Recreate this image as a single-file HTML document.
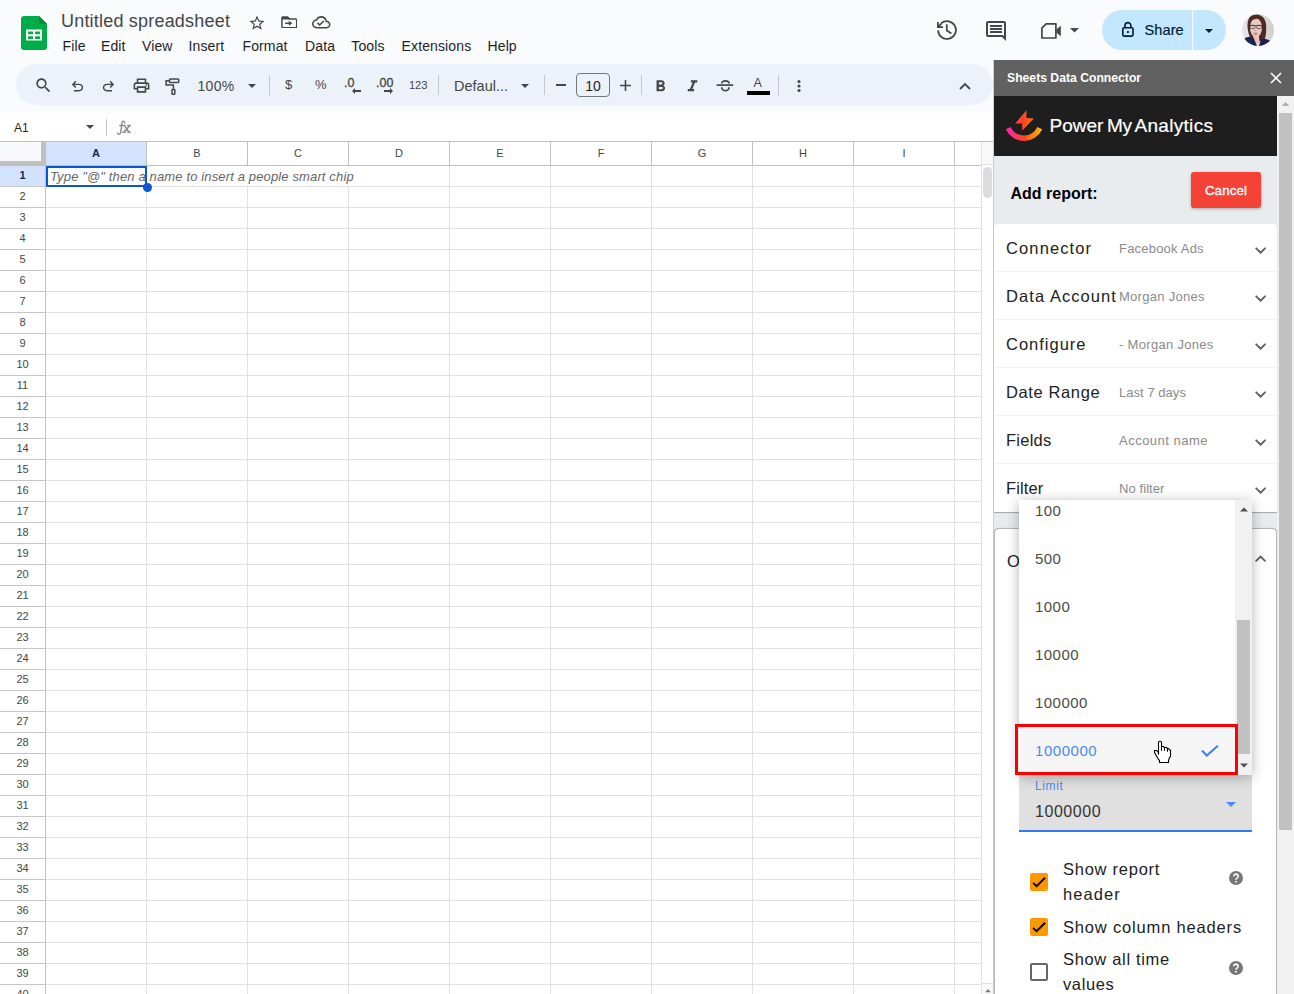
<!DOCTYPE html>
<html><head><meta charset="utf-8"><title>Sheets</title>
<style>
*{margin:0;padding:0;box-sizing:border-box}
html,body{width:1294px;height:994px;overflow:hidden}
body{background:#f9fbfd;font-family:"Liberation Sans", sans-serif;position:relative;color:#1f1f1f}
.abs{position:absolute}
.t{position:absolute;white-space:nowrap;line-height:1}
svg{position:absolute;display:block}
</style></head><body>

<svg style="left:21px;top:16px" width="26" height="34" viewBox="0 0 26 34">
<path d="M3 0h15l8 8v23a3 3 0 0 1-3 3H3a3 3 0 0 1-3-3V3a3 3 0 0 1 3-3z" fill="#00ac47"/>
<path d="M18 0l8 8h-8z" fill="#008c34"/>
<rect x="5" y="13.5" width="16" height="11" fill="#fff"/>
<rect x="7" y="15.5" width="5" height="2.8" rx="0.5" fill="#00ac47"/><rect x="14" y="15.5" width="5" height="2.8" rx="0.5" fill="#00ac47"/>
<rect x="7" y="20.3" width="5" height="2.8" rx="0.5" fill="#00ac47"/><rect x="14" y="20.3" width="5" height="2.8" rx="0.5" fill="#00ac47"/>
</svg>
<div class="t" style="left:61px;top:12px;font-size:18px;letter-spacing:0.2px;color:#444746">Untitled spreadsheet</div>
<svg style="left:247.6px;top:13.6px" width="18" height="18" viewBox="0 0 24 24"><path fill="#444746" d="M22 9.24l-7.19-.62L12 2 9.19 8.63 2 9.24l5.46 4.73L5.82 21 12 17.27 18.18 21l-1.63-7.03L22 9.24zM12 15.4l-3.76 2.27 1-4.28-3.32-2.88 4.38-.38L12 6.1l1.71 4.04 4.38.38-3.32 2.88 1 4.28L12 15.4z"/></svg>
<svg style="left:280.6px;top:15.6px" width="16.6" height="12.6" viewBox="0 0 18 14" preserveAspectRatio="none"><path fill="none" stroke="#444746" stroke-width="1.6" d="M2 1.1H7.2L9 3.3H16a1 1 0 0 1 1 1V11.9a1 1 0 0 1-1 1H2a1 1 0 0 1-1-1V2.1a1 1 0 0 1 1-1z"/><path fill="#444746" d="M1 1h6.5l2.2 3H1z"/><path stroke="#444746" stroke-width="1.7" d="M4.5 8.1H9"/><path fill="#444746" d="M8.5 5.3L12.3 8.1 8.5 10.9z"/></svg>
<svg style="left:312px;top:13px" width="18.5" height="18.5" viewBox="0 0 24 24"><path fill="#444746" d="M19.35 10.04C18.67 6.59 15.64 4 12 4 9.11 4 6.6 5.64 5.35 8.04 2.34 8.36 0 10.91 0 14c0 3.31 2.69 6 6 6h13c2.76 0 5-2.24 5-5 0-2.64-2.05-4.780-4.65-4.96zM19 18H6c-2.21 0-4-1.79-4-4 0-2.05 1.53-3.76 3.56-3.97l1.07-.11.5-.95C8.080 7.14 9.94 6 12 6c2.62 0 4.88 1.86 5.39 4.43l.3 1.5 1.53.11c1.56.1 2.78 1.41 2.78 2.96 0 1.65-1.35 3-3 3zm-9-3.82l-2.09-2.09L6.5 13.5 10 17l6.01-6.01-1.41-1.41z"/></svg>
<div class="t" style="left:62.5px;top:39px;font-size:14px;letter-spacing:0.12px;color:#1f1f1f">File</div>
<div class="t" style="left:101px;top:39px;font-size:14px;letter-spacing:0.12px;color:#1f1f1f">Edit</div>
<div class="t" style="left:142px;top:39px;font-size:14px;letter-spacing:0.12px;color:#1f1f1f">View</div>
<div class="t" style="left:188.5px;top:39px;font-size:14px;letter-spacing:0.12px;color:#1f1f1f">Insert</div>
<div class="t" style="left:242.5px;top:39px;font-size:14px;letter-spacing:0.12px;color:#1f1f1f">Format</div>
<div class="t" style="left:305px;top:39px;font-size:14px;letter-spacing:0.12px;color:#1f1f1f">Data</div>
<div class="t" style="left:351.3px;top:39px;font-size:14px;letter-spacing:0.12px;color:#1f1f1f">Tools</div>
<div class="t" style="left:401.6px;top:39px;font-size:14px;letter-spacing:0.12px;color:#1f1f1f">Extensions</div>
<div class="t" style="left:487.5px;top:39px;font-size:14px;letter-spacing:0.12px;color:#1f1f1f">Help</div>
<svg style="left:935px;top:18px" width="24" height="24" viewBox="0 0 24 24"><g fill="none" stroke="#444746" stroke-width="1.75"><path d="M3.1 12.4A8.9 8.9 0 1 0 6.3 5.2"/><path d="M2.9 4.1V9.2H8M3.2 8.9L6.6 5.3"/><path d="M11.8 6.2V12.6L16.4 15.6"/></g></svg>
<svg style="left:984px;top:19px" width="24" height="24" viewBox="0 0 24 24"><path fill="#444746" d="M22 4c0-1.1-.9-2-2-2H4c-1.1 0-2 .9-2 2v12c0 1.1.9 2 2 2h14l4 4V4zm-2 13.17L18.83 16H4V4h16v13.17zM6 12h12v2H6zm0-3h12v2H6zm0-3h12v2H6z"/></svg>
<svg style="left:1040px;top:22px" width="22" height="18" viewBox="0 0 22 18"><path fill="none" stroke="#444746" stroke-width="1.7" stroke-linejoin="round" d="M6.1 1.8H15.9V16H1.9V6.2z"/><path fill="#444746" d="M16.5 7.2L20.8 3.8V14.2L16.5 10.8z"/></svg>
<svg style="left:1070px;top:28px" width="9" height="4.5" viewBox="0 0 10 5"><path fill="#444746" d="M0 0h10L5 5z"/></svg>
<div class="abs" style="left:1102px;top:10px;width:124px;height:40px;border-radius:20px;background:#c2e7ff"></div>
<div class="abs" style="left:1192px;top:10px;width:1px;height:40px;background:#f9fbfd"></div>
<svg style="left:1120px;top:20px" width="16" height="18" viewBox="0 0 16 18"><rect x="2.8" y="7.8" width="10.2" height="8.3" rx="1.3" fill="none" stroke="#001d35" stroke-width="1.6"/><path fill="none" stroke="#001d35" stroke-width="1.6" d="M5 7.8V5.6a2.95 2.95 0 0 1 5.9 0V7.8"/><circle cx="7.9" cy="12.1" r="1.15" fill="#001d35"/></svg>
<div class="t" style="left:1144.6px;top:22.8px;font-size:14.5px;letter-spacing:0.1px;-webkit-text-stroke:0.2px #001d35;color:#001d35">Share</div>
<svg style="left:1205px;top:28.6px" width="8" height="4" viewBox="0 0 10 5"><path fill="#001d35" d="M0 0h10L5 5z"/></svg>
<svg style="left:1242px;top:14px" width="32" height="32" viewBox="0 0 32 32">
<defs><clipPath id="av"><circle cx="16" cy="16" r="16"/></clipPath>
<linearGradient id="avbg" x1="0" y1="0" x2="1" y2="0"><stop offset="0" stop-color="#e6e4ea"/><stop offset="0.6" stop-color="#dedad6"/><stop offset="1" stop-color="#d4cfc8"/></linearGradient></defs>
<g clip-path="url(#av)">
<rect width="32" height="32" fill="url(#avbg)"/>
<path d="M5.5 10 C6 3.5 9.5 0.5 14.5 0.6 C19.5 0.8 23 4 24 10 C24.6 15 24.2 20 23 25 L19.5 27 L9 26.5 C7 21.5 5.2 15.5 5.5 10z" fill="#4e2a25"/>
<ellipse cx="14" cy="13.8" rx="6" ry="9.6" fill="#e9c8c0"/>
<path d="M7.8 4.5 C10 2.8 13.5 2.4 16.5 3.6 C15 5 12 5.5 8.5 6.5z" fill="#4e2a25"/>
<path d="M7.6 11.6 H20.4" stroke="#4a3d3a" stroke-width="0.8"/>
<rect x="8" y="11.3" width="5" height="3.3" rx="1.2" fill="none" stroke="#4a3d3a" stroke-width="0.75"/>
<rect x="14.6" y="11.3" width="5" height="3.3" rx="1.2" fill="none" stroke="#4a3d3a" stroke-width="0.75"/>
<ellipse cx="13.4" cy="16.4" rx="1" ry="0.8" fill="#d79a90"/>
<ellipse cx="13.5" cy="19.7" rx="2.1" ry="1.3" fill="#d8877a"/>
<path d="M11 22 L17 22 L17.5 30 L11 30z" fill="#e6c2b8"/>
<path d="M0 32 L2.5 24.5 C5 23 8.5 22.8 11.5 23.5 L15 32z" fill="#1c2552"/>
<path d="M17 32 L19 25 C22 24.5 26 25.5 28.5 27 L30 32z" fill="#1a2050"/>
</g></svg>
<div class="abs" style="left:16px;top:64px;width:977px;height:41px;border-radius:20.5px;background:#edf2fa"></div>
<svg style="left:33.6px;top:76.2px" width="18.9" height="18.9" viewBox="0 0 24 24"><path fill="#444746" d="M15.5 14h-.79l-.28-.27C15.41 12.59 16 11.11 16 9.5 16 5.91 13.09 3 9.5 3S3 5.91 3 9.5 5.91 16 9.5 16c1.61 0 3.090-.59 4.23-1.57l.27.28v.79l5 4.99L20.49 19l-4.99-5zm-6 0C7.01 14 5 11.99 5 9.5S7.01 5 9.5 5 14 7.01 14 9.5 11.99 14 9.5 14z"/></svg>
<svg style="left:69px;top:78px" width="17" height="17" viewBox="0 -960 960 960"><path fill="#444746" d="M280-200v-80h284q63 0 109.5-40T720-420q0-60-46.5-100T564-560H312l104 104-56 56-200-200 200-200 56 56-104 104h252q97 0 166.5 63T800-420q0 94-69.5 157T564-200H280Z"/></svg>
<svg style="left:100px;top:78px" width="17" height="17" viewBox="0 -960 960 960"><path fill="#444746" d="M396-200q-97 0-166.5-63T160-420q0-94 69.5-157T396-640h252L544-744l56-56 200 200-200 200-56-56 104-104H396q-63 0-109.5 40T240-420q0 60 46.5 100T396-280h284v80H396Z"/></svg>
<svg style="left:132px;top:76px" width="19" height="19" viewBox="0 -960 960 960"><path fill="#444746" d="M640-640v-120H320v120h-80v-200h480v200h-80Zm-480 80h640-640Zm560 100q17 0 28.5-11.5T760-500q0-17-11.5-28.5T720-540q-17 0-28.5 11.5T680-500q0 17 11.5 28.5T720-460Zm-80 260v-160H320v160h320Zm80 80H240v-160H80v-240q0-51 35-85.5t85-34.5h560q51 0 85.5 34.5T880-520v240H720v160Zm80-240v-160q0-17-11.5-28.5T760-560H200q-17 0-28.5 11.5T160-520v160h80v-80h480v80h80Z"/></svg>
<svg style="left:164px;top:77px" width="16" height="19" viewBox="0 0 16 19"><g fill="none" stroke="#444746" stroke-width="1.5"><rect x="5.5" y="1.9" width="9.2" height="3.6" rx="0.8"/><path d="M5.5 3.7H2.1V7.9H9.4V12.4"/><rect x="8" y="12.4" width="2.8" height="4.9" rx="0.6"/></g></svg>
<div class="t" style="left:197.5px;top:79px;font-size:14px;letter-spacing:0.3px;color:#444746">100%</div>
<svg style="left:248px;top:84px" width="8" height="4" viewBox="0 0 10 5"><path fill="#444746" d="M0 0h10L5 5z"/></svg>
<div class="abs" style="left:269px;top:75px;width:1px;height:20px;background:#c7c7c7"></div>
<div class="t" style="left:285px;top:78px;font-size:13px;color:#444746">$</div>
<div class="t" style="left:315px;top:78px;font-size:13px;color:#444746">%</div>
<div class="t" style="left:344px;top:76.5px;font-size:12.5px;-webkit-text-stroke:0.3px #444746;color:#444746">.0</div>
<svg style="left:352px;top:88px" width="9" height="6" viewBox="0 0 9 6"><path fill="#444746" d="M3 0L0 3l3 3V4h6V2H3z"/></svg>
<div class="t" style="left:376px;top:76.5px;font-size:12.5px;-webkit-text-stroke:0.3px #444746;color:#444746">.00</div>
<svg style="left:384px;top:88px" width="9" height="6" viewBox="0 0 9 6"><path fill="#444746" d="M6 0l3 3-3 3V4H0V2h6z"/></svg>
<div class="t" style="left:409px;top:79.8px;font-size:11.2px;letter-spacing:-0.1px;color:#444746">123</div>
<div class="abs" style="left:438px;top:75px;width:1px;height:20px;background:#c7c7c7"></div>
<div class="t" style="left:454px;top:79px;font-size:14.5px;color:#444746">Defaul...</div>
<svg style="left:521px;top:84px" width="8" height="4" viewBox="0 0 10 5"><path fill="#444746" d="M0 0h10L5 5z"/></svg>
<div class="abs" style="left:544px;top:75px;width:1px;height:20px;background:#c7c7c7"></div>
<div class="abs" style="left:555.5px;top:84.2px;width:10.5px;height:1.6px;background:#444746"></div>
<div class="abs" style="left:576px;top:73px;width:34px;height:24px;border:1px solid #747775;border-radius:4px"></div>
<div class="t" style="left:576px;top:79px;width:34px;text-align:center;font-size:14px;color:#1f1f1f">10</div>
<svg style="left:619.5px;top:79.5px" width="11" height="11" viewBox="0 0 11 11"><path fill="none" stroke="#444746" stroke-width="1.6" d="M5.5 0v11M0 5.5h11"/></svg>
<div class="abs" style="left:641px;top:75px;width:1px;height:20px;background:#c7c7c7"></div>
<svg style="left:651px;top:77px" width="19" height="19" viewBox="0 0 24 24"><path fill="#444746" d="M15.6 10.79c.97-.67 1.65-1.77 1.65-2.79 0-2.26-1.75-4-4-4H7v14h7.04c2.09 0 3.71-1.7 3.71-3.79 0-1.52-.86-2.82-2.15-3.42zM10 6.5h3c.83 0 1.5.67 1.5 1.5s-.67 1.5-1.5 1.5h-3v-3zm3.5 9H10v-3h3.5c.83 0 1.5.67 1.5 1.5s-.67 1.5-1.5 1.5z"/></svg>
<svg style="left:683px;top:77px" width="19" height="19" viewBox="0 0 24 24"><path fill="#444746" d="M10 4v3h2.21l-3.42 8H6v3h8v-3h-2.21l3.42-8H18V4z"/></svg>
<svg style="left:716px;top:78px" width="18" height="15" viewBox="0 0 18 15"><g fill="none" stroke="#444746" stroke-width="1.7"><path d="M0.6 7.1h16.6"/><path d="M5.7 5.6A3.7 2.8 0 0 1 13.1 5.6"/><path d="M5.7 9.3A3.7 3.4 0 0 0 13.1 9.3"/></g></svg>
<div class="t" style="left:753.5px;top:76.5px;font-size:12.5px;color:#444746">A</div>
<div class="abs" style="left:747px;top:91px;width:23px;height:4px;background:#000"></div>
<div class="abs" style="left:778px;top:75px;width:1px;height:20px;background:#c7c7c7"></div>
<svg style="left:797px;top:79px" width="4" height="14" viewBox="0 0 4 14"><circle cx="2" cy="2.5" r="1.55" fill="#444746"/><circle cx="2" cy="7" r="1.55" fill="#444746"/><circle cx="2" cy="11.5" r="1.55" fill="#444746"/></svg>
<svg style="left:959px;top:82px" width="12" height="8" viewBox="0 0 12 8"><path fill="none" stroke="#444746" stroke-width="1.8" d="M1 7l5-5 5 5"/></svg>
<div class="abs" style="left:0;top:113px;width:994px;height:28px;background:#fff"></div>
<div class="t" style="left:14px;top:121.5px;font-size:12px;color:#1f1f1f">A1</div>
<svg style="left:86px;top:125px" width="8" height="4" viewBox="0 0 10 5"><path fill="#444746" d="M0 0h10L5 5z"/></svg>
<div class="abs" style="left:106px;top:119px;width:1px;height:17px;background:#c7c7c7"></div>
<svg style="left:110px;top:114px" width="30" height="26" viewBox="0 0 30 26"><g fill="none" stroke="#8d8d8d" stroke-width="1.45" stroke-linecap="round"><path d="M14.9 8.9C14.7 7.5 13.8 7.1 13.1 7.3 12.3 7.6 12 8.4 11.9 9.5L10.7 18.4C10.5 19.8 9.7 20.3 8.9 20.2 8.1 20.1 7.6 19.5 7.6 18.9"/><path d="M9.3 11.5H15.6M14.3 11.6L19.2 18.3M19.9 11.6L13.7 18.3M17.3 11.5H20.8M12.3 18.3H15.7M17.3 18.3H20.8" stroke-linecap="butt"/></g></svg>
<div class="abs" style="left:0;top:141px;width:994px;height:853px;background:#fff"></div>
<div class="abs" style="left:0;top:141px;width:993px;height:1px;background:#c0c0c0"></div>
<div class="abs" style="left:0;top:165px;width:981px;height:1px;background:#c0c0c0"></div>
<div class="abs" style="left:0;top:186px;width:981px;height:1px;background:#e1e1e1"></div>
<div class="abs" style="left:0;top:186px;width:45px;height:1px;background:#c7c7c7"></div>
<div class="abs" style="left:0;top:207px;width:981px;height:1px;background:#e1e1e1"></div>
<div class="abs" style="left:0;top:207px;width:45px;height:1px;background:#c7c7c7"></div>
<div class="abs" style="left:0;top:228px;width:981px;height:1px;background:#e1e1e1"></div>
<div class="abs" style="left:0;top:228px;width:45px;height:1px;background:#c7c7c7"></div>
<div class="abs" style="left:0;top:249px;width:981px;height:1px;background:#e1e1e1"></div>
<div class="abs" style="left:0;top:249px;width:45px;height:1px;background:#c7c7c7"></div>
<div class="abs" style="left:0;top:270px;width:981px;height:1px;background:#e1e1e1"></div>
<div class="abs" style="left:0;top:270px;width:45px;height:1px;background:#c7c7c7"></div>
<div class="abs" style="left:0;top:291px;width:981px;height:1px;background:#e1e1e1"></div>
<div class="abs" style="left:0;top:291px;width:45px;height:1px;background:#c7c7c7"></div>
<div class="abs" style="left:0;top:312px;width:981px;height:1px;background:#e1e1e1"></div>
<div class="abs" style="left:0;top:312px;width:45px;height:1px;background:#c7c7c7"></div>
<div class="abs" style="left:0;top:333px;width:981px;height:1px;background:#e1e1e1"></div>
<div class="abs" style="left:0;top:333px;width:45px;height:1px;background:#c7c7c7"></div>
<div class="abs" style="left:0;top:354px;width:981px;height:1px;background:#e1e1e1"></div>
<div class="abs" style="left:0;top:354px;width:45px;height:1px;background:#c7c7c7"></div>
<div class="abs" style="left:0;top:375px;width:981px;height:1px;background:#e1e1e1"></div>
<div class="abs" style="left:0;top:375px;width:45px;height:1px;background:#c7c7c7"></div>
<div class="abs" style="left:0;top:396px;width:981px;height:1px;background:#e1e1e1"></div>
<div class="abs" style="left:0;top:396px;width:45px;height:1px;background:#c7c7c7"></div>
<div class="abs" style="left:0;top:417px;width:981px;height:1px;background:#e1e1e1"></div>
<div class="abs" style="left:0;top:417px;width:45px;height:1px;background:#c7c7c7"></div>
<div class="abs" style="left:0;top:438px;width:981px;height:1px;background:#e1e1e1"></div>
<div class="abs" style="left:0;top:438px;width:45px;height:1px;background:#c7c7c7"></div>
<div class="abs" style="left:0;top:459px;width:981px;height:1px;background:#e1e1e1"></div>
<div class="abs" style="left:0;top:459px;width:45px;height:1px;background:#c7c7c7"></div>
<div class="abs" style="left:0;top:480px;width:981px;height:1px;background:#e1e1e1"></div>
<div class="abs" style="left:0;top:480px;width:45px;height:1px;background:#c7c7c7"></div>
<div class="abs" style="left:0;top:501px;width:981px;height:1px;background:#e1e1e1"></div>
<div class="abs" style="left:0;top:501px;width:45px;height:1px;background:#c7c7c7"></div>
<div class="abs" style="left:0;top:522px;width:981px;height:1px;background:#e1e1e1"></div>
<div class="abs" style="left:0;top:522px;width:45px;height:1px;background:#c7c7c7"></div>
<div class="abs" style="left:0;top:543px;width:981px;height:1px;background:#e1e1e1"></div>
<div class="abs" style="left:0;top:543px;width:45px;height:1px;background:#c7c7c7"></div>
<div class="abs" style="left:0;top:564px;width:981px;height:1px;background:#e1e1e1"></div>
<div class="abs" style="left:0;top:564px;width:45px;height:1px;background:#c7c7c7"></div>
<div class="abs" style="left:0;top:585px;width:981px;height:1px;background:#e1e1e1"></div>
<div class="abs" style="left:0;top:585px;width:45px;height:1px;background:#c7c7c7"></div>
<div class="abs" style="left:0;top:606px;width:981px;height:1px;background:#e1e1e1"></div>
<div class="abs" style="left:0;top:606px;width:45px;height:1px;background:#c7c7c7"></div>
<div class="abs" style="left:0;top:627px;width:981px;height:1px;background:#e1e1e1"></div>
<div class="abs" style="left:0;top:627px;width:45px;height:1px;background:#c7c7c7"></div>
<div class="abs" style="left:0;top:648px;width:981px;height:1px;background:#e1e1e1"></div>
<div class="abs" style="left:0;top:648px;width:45px;height:1px;background:#c7c7c7"></div>
<div class="abs" style="left:0;top:669px;width:981px;height:1px;background:#e1e1e1"></div>
<div class="abs" style="left:0;top:669px;width:45px;height:1px;background:#c7c7c7"></div>
<div class="abs" style="left:0;top:690px;width:981px;height:1px;background:#e1e1e1"></div>
<div class="abs" style="left:0;top:690px;width:45px;height:1px;background:#c7c7c7"></div>
<div class="abs" style="left:0;top:711px;width:981px;height:1px;background:#e1e1e1"></div>
<div class="abs" style="left:0;top:711px;width:45px;height:1px;background:#c7c7c7"></div>
<div class="abs" style="left:0;top:732px;width:981px;height:1px;background:#e1e1e1"></div>
<div class="abs" style="left:0;top:732px;width:45px;height:1px;background:#c7c7c7"></div>
<div class="abs" style="left:0;top:753px;width:981px;height:1px;background:#e1e1e1"></div>
<div class="abs" style="left:0;top:753px;width:45px;height:1px;background:#c7c7c7"></div>
<div class="abs" style="left:0;top:774px;width:981px;height:1px;background:#e1e1e1"></div>
<div class="abs" style="left:0;top:774px;width:45px;height:1px;background:#c7c7c7"></div>
<div class="abs" style="left:0;top:795px;width:981px;height:1px;background:#e1e1e1"></div>
<div class="abs" style="left:0;top:795px;width:45px;height:1px;background:#c7c7c7"></div>
<div class="abs" style="left:0;top:816px;width:981px;height:1px;background:#e1e1e1"></div>
<div class="abs" style="left:0;top:816px;width:45px;height:1px;background:#c7c7c7"></div>
<div class="abs" style="left:0;top:837px;width:981px;height:1px;background:#e1e1e1"></div>
<div class="abs" style="left:0;top:837px;width:45px;height:1px;background:#c7c7c7"></div>
<div class="abs" style="left:0;top:858px;width:981px;height:1px;background:#e1e1e1"></div>
<div class="abs" style="left:0;top:858px;width:45px;height:1px;background:#c7c7c7"></div>
<div class="abs" style="left:0;top:879px;width:981px;height:1px;background:#e1e1e1"></div>
<div class="abs" style="left:0;top:879px;width:45px;height:1px;background:#c7c7c7"></div>
<div class="abs" style="left:0;top:900px;width:981px;height:1px;background:#e1e1e1"></div>
<div class="abs" style="left:0;top:900px;width:45px;height:1px;background:#c7c7c7"></div>
<div class="abs" style="left:0;top:921px;width:981px;height:1px;background:#e1e1e1"></div>
<div class="abs" style="left:0;top:921px;width:45px;height:1px;background:#c7c7c7"></div>
<div class="abs" style="left:0;top:942px;width:981px;height:1px;background:#e1e1e1"></div>
<div class="abs" style="left:0;top:942px;width:45px;height:1px;background:#c7c7c7"></div>
<div class="abs" style="left:0;top:963px;width:981px;height:1px;background:#e1e1e1"></div>
<div class="abs" style="left:0;top:963px;width:45px;height:1px;background:#c7c7c7"></div>
<div class="abs" style="left:0;top:984px;width:981px;height:1px;background:#e1e1e1"></div>
<div class="abs" style="left:0;top:984px;width:45px;height:1px;background:#c7c7c7"></div>
<div class="abs" style="left:45px;top:141px;width:1px;height:853px;background:#c0c0c0"></div>
<div class="abs" style="left:146px;top:141px;width:1px;height:24px;background:#c0c0c0"></div>
<div class="abs" style="left:146px;top:166px;width:1px;height:828px;background:#e1e1e1"></div>
<div class="abs" style="left:247px;top:141px;width:1px;height:24px;background:#c0c0c0"></div>
<div class="abs" style="left:247px;top:166px;width:1px;height:828px;background:#e1e1e1"></div>
<div class="abs" style="left:348px;top:141px;width:1px;height:24px;background:#c0c0c0"></div>
<div class="abs" style="left:348px;top:166px;width:1px;height:828px;background:#e1e1e1"></div>
<div class="abs" style="left:449px;top:141px;width:1px;height:24px;background:#c0c0c0"></div>
<div class="abs" style="left:449px;top:166px;width:1px;height:828px;background:#e1e1e1"></div>
<div class="abs" style="left:550px;top:141px;width:1px;height:24px;background:#c0c0c0"></div>
<div class="abs" style="left:550px;top:166px;width:1px;height:828px;background:#e1e1e1"></div>
<div class="abs" style="left:651px;top:141px;width:1px;height:24px;background:#c0c0c0"></div>
<div class="abs" style="left:651px;top:166px;width:1px;height:828px;background:#e1e1e1"></div>
<div class="abs" style="left:752px;top:141px;width:1px;height:24px;background:#c0c0c0"></div>
<div class="abs" style="left:752px;top:166px;width:1px;height:828px;background:#e1e1e1"></div>
<div class="abs" style="left:853px;top:141px;width:1px;height:24px;background:#c0c0c0"></div>
<div class="abs" style="left:853px;top:166px;width:1px;height:828px;background:#e1e1e1"></div>
<div class="abs" style="left:954px;top:141px;width:1px;height:24px;background:#c0c0c0"></div>
<div class="abs" style="left:954px;top:166px;width:1px;height:828px;background:#e1e1e1"></div>
<div class="abs" style="left:0;top:142px;width:45px;height:23px;background:#f8f9fa"></div>
<div class="abs" style="left:41px;top:142px;width:4px;height:23px;background:#c0c0c0"></div>
<div class="abs" style="left:0;top:161px;width:45px;height:4px;background:#c0c0c0"></div>
<div class="abs" style="left:46px;top:142px;width:100px;height:23px;background:#d3e3fd"></div>
<div class="abs" style="left:0;top:166px;width:45px;height:20px;background:#d3e3fd"></div>
<div class="t" style="left:46px;top:148px;width:100px;text-align:center;font-size:11px;font-weight:bold;color:#0b2a5b">A</div>
<div class="t" style="left:147px;top:148px;width:100px;text-align:center;font-size:11px;color:#444746">B</div>
<div class="t" style="left:248px;top:148px;width:100px;text-align:center;font-size:11px;color:#444746">C</div>
<div class="t" style="left:349px;top:148px;width:100px;text-align:center;font-size:11px;color:#444746">D</div>
<div class="t" style="left:450px;top:148px;width:100px;text-align:center;font-size:11px;color:#444746">E</div>
<div class="t" style="left:551px;top:148px;width:100px;text-align:center;font-size:11px;color:#444746">F</div>
<div class="t" style="left:652px;top:148px;width:100px;text-align:center;font-size:11px;color:#444746">G</div>
<div class="t" style="left:753px;top:148px;width:100px;text-align:center;font-size:11px;color:#444746">H</div>
<div class="t" style="left:854px;top:148px;width:100px;text-align:center;font-size:11px;color:#444746">I</div>
<div class="t" style="left:0;top:170px;width:45px;text-align:center;font-size:11px;font-weight:bold;color:#0b2a5b">1</div>
<div class="t" style="left:0;top:191px;width:45px;text-align:center;font-size:11px;color:#444746">2</div>
<div class="t" style="left:0;top:212px;width:45px;text-align:center;font-size:11px;color:#444746">3</div>
<div class="t" style="left:0;top:233px;width:45px;text-align:center;font-size:11px;color:#444746">4</div>
<div class="t" style="left:0;top:254px;width:45px;text-align:center;font-size:11px;color:#444746">5</div>
<div class="t" style="left:0;top:275px;width:45px;text-align:center;font-size:11px;color:#444746">6</div>
<div class="t" style="left:0;top:296px;width:45px;text-align:center;font-size:11px;color:#444746">7</div>
<div class="t" style="left:0;top:317px;width:45px;text-align:center;font-size:11px;color:#444746">8</div>
<div class="t" style="left:0;top:338px;width:45px;text-align:center;font-size:11px;color:#444746">9</div>
<div class="t" style="left:0;top:359px;width:45px;text-align:center;font-size:11px;color:#444746">10</div>
<div class="t" style="left:0;top:380px;width:45px;text-align:center;font-size:11px;color:#444746">11</div>
<div class="t" style="left:0;top:401px;width:45px;text-align:center;font-size:11px;color:#444746">12</div>
<div class="t" style="left:0;top:422px;width:45px;text-align:center;font-size:11px;color:#444746">13</div>
<div class="t" style="left:0;top:443px;width:45px;text-align:center;font-size:11px;color:#444746">14</div>
<div class="t" style="left:0;top:464px;width:45px;text-align:center;font-size:11px;color:#444746">15</div>
<div class="t" style="left:0;top:485px;width:45px;text-align:center;font-size:11px;color:#444746">16</div>
<div class="t" style="left:0;top:506px;width:45px;text-align:center;font-size:11px;color:#444746">17</div>
<div class="t" style="left:0;top:527px;width:45px;text-align:center;font-size:11px;color:#444746">18</div>
<div class="t" style="left:0;top:548px;width:45px;text-align:center;font-size:11px;color:#444746">19</div>
<div class="t" style="left:0;top:569px;width:45px;text-align:center;font-size:11px;color:#444746">20</div>
<div class="t" style="left:0;top:590px;width:45px;text-align:center;font-size:11px;color:#444746">21</div>
<div class="t" style="left:0;top:611px;width:45px;text-align:center;font-size:11px;color:#444746">22</div>
<div class="t" style="left:0;top:632px;width:45px;text-align:center;font-size:11px;color:#444746">23</div>
<div class="t" style="left:0;top:653px;width:45px;text-align:center;font-size:11px;color:#444746">24</div>
<div class="t" style="left:0;top:674px;width:45px;text-align:center;font-size:11px;color:#444746">25</div>
<div class="t" style="left:0;top:695px;width:45px;text-align:center;font-size:11px;color:#444746">26</div>
<div class="t" style="left:0;top:716px;width:45px;text-align:center;font-size:11px;color:#444746">27</div>
<div class="t" style="left:0;top:737px;width:45px;text-align:center;font-size:11px;color:#444746">28</div>
<div class="t" style="left:0;top:758px;width:45px;text-align:center;font-size:11px;color:#444746">29</div>
<div class="t" style="left:0;top:779px;width:45px;text-align:center;font-size:11px;color:#444746">30</div>
<div class="t" style="left:0;top:800px;width:45px;text-align:center;font-size:11px;color:#444746">31</div>
<div class="t" style="left:0;top:821px;width:45px;text-align:center;font-size:11px;color:#444746">32</div>
<div class="t" style="left:0;top:842px;width:45px;text-align:center;font-size:11px;color:#444746">33</div>
<div class="t" style="left:0;top:863px;width:45px;text-align:center;font-size:11px;color:#444746">34</div>
<div class="t" style="left:0;top:884px;width:45px;text-align:center;font-size:11px;color:#444746">35</div>
<div class="t" style="left:0;top:905px;width:45px;text-align:center;font-size:11px;color:#444746">36</div>
<div class="t" style="left:0;top:926px;width:45px;text-align:center;font-size:11px;color:#444746">37</div>
<div class="t" style="left:0;top:947px;width:45px;text-align:center;font-size:11px;color:#444746">38</div>
<div class="t" style="left:0;top:968px;width:45px;text-align:center;font-size:11px;color:#444746">39</div>
<div class="t" style="left:0;top:989px;width:45px;text-align:center;font-size:11px;color:#444746">40</div>
<div class="abs" style="left:147px;top:166px;width:302px;height:20px;background:#fff"></div>
<div class="abs" style="left:46px;top:166px;width:101px;height:21px;border:2px solid #0b57d0"></div>
<div class="t" style="left:50px;top:169.8px;font-size:13px;font-style:italic;letter-spacing:0.14px;color:#666">Type "@" then a name to insert a people smart chip</div>
<div class="abs" style="left:142.5px;top:182.5px;width:9px;height:9px;border-radius:50%;background:#0b57d0"></div>
<div class="abs" style="left:981px;top:142px;width:13px;height:852px;background:#fff;border-left:1px solid #e1e1e1;border-right:1px solid #dadce0"></div>
<div class="abs" style="left:982px;top:142px;width:11px;height:23px;background:#f8f8f8;border-bottom:1px solid #e1e1e1"></div>
<div class="abs" style="left:983px;top:167px;width:9px;height:31px;border-radius:5px;background:#dadce0"></div>
<div class="abs" style="left:982px;top:983px;width:11px;height:11px;background:#f8f8f8;border-top:1px solid #e1e1e1"></div>
<svg style="left:985px;top:989px" width="6" height="3.5" viewBox="0 0 10 5"><path fill="#777" d="M0 5h10L5 0z"/></svg>
<div class="abs" style="left:993px;top:60px;width:1px;height:934px;background:#cfcfcf"></div>
<div class="abs" style="left:994px;top:60px;width:300px;height:36px;background:#616161"></div>
<div class="t" style="left:1007px;top:71.5px;font-size:12.2px;font-weight:bold;color:#fff">Sheets Data Connector</div>
<svg style="left:1270px;top:72px" width="12" height="12" viewBox="0 0 12 12"><path stroke="#fff" stroke-width="1.6" d="M1 1l10 10M11 1L1 11"/></svg>
<div class="abs" style="left:994px;top:96px;width:283px;height:898px;background:#e9ecef"></div>
<div class="abs" style="left:1277px;top:96px;width:17px;height:898px;background:#f1f1f1"></div>
<div class="abs" style="left:1279px;top:113px;width:13px;height:717px;background:#c1c1c1"></div>
<svg style="left:1282px;top:102px" width="7" height="4" viewBox="0 0 10 5"><path fill="#a3a3a3" d="M0 5h10L5 0z"/></svg>
<div class="abs" style="left:994px;top:96px;width:283px;height:60px;background:#1e1e1e"></div>
<svg style="left:1000px;top:104px" width="50" height="42" viewBox="0 0 50 42">
<defs><linearGradient id="arc" gradientUnits="userSpaceOnUse" x1="5" y1="0" x2="43" y2="0"><stop offset="0" stop-color="#ff1fc0"/><stop offset="0.5" stop-color="#ff4520"/><stop offset="1" stop-color="#ffc400"/></linearGradient>
<linearGradient id="bolt" gradientUnits="userSpaceOnUse" x1="15" y1="0" x2="34" y2="0"><stop offset="0" stop-color="#ff3a55"/><stop offset="0.5" stop-color="#ff4a1c"/><stop offset="1" stop-color="#ff7a10"/></linearGradient></defs>
<path d="M8.27 24.1 A17.3 17.3 0 0 0 39.73 24.1" fill="none" stroke="url(#arc)" stroke-width="5.5"/>
<path d="M26.4 6.3 L26.4 14 L33.8 14.4 L22.2 26.8 L22.2 19.4 L15.2 19.4 Z" fill="url(#bolt)"/>
</svg>
<div class="t" style="left:1049.5px;top:116px;font-size:19px;-webkit-text-stroke:0.2px #fff;color:#fff">Power</div>
<div class="t" style="left:1107px;top:116px;font-size:19px;letter-spacing:-0.3px;-webkit-text-stroke:0.2px #fff;color:#fff">My</div>
<div class="t" style="left:1134.5px;top:116px;font-size:19px;letter-spacing:0.3px;-webkit-text-stroke:0.2px #fff;color:#fff">Analytics</div>
<div class="t" style="left:1010.5px;top:185.5px;font-size:16px;font-weight:bold;color:#000">Add report:</div>
<div class="abs" style="left:1191px;top:172px;width:70px;height:36px;border-radius:3px;background:#f44336;box-shadow:0 1px 3px rgba(0,0,0,.3)"></div>
<div class="t" style="left:1191px;top:183.5px;width:70px;text-align:center;font-size:13.2px;letter-spacing:0.2px;font-weight:normal;-webkit-text-stroke:0.35px #fff;color:#fff">Cancel</div>
<div class="abs" style="left:994px;top:224px;width:283px;height:288px;background:#fff;border-radius:4px 4px 0 0;box-shadow:0 1px 1px rgba(0,0,0,.3)"></div>
<div class="t" style="left:1006px;top:240px;font-size:16.5px;letter-spacing:1.12px;color:#212121">Connector</div>
<div class="t" style="left:1119px;top:242px;font-size:13px;letter-spacing:0.2px;color:#8a8a8a">Facebook Ads</div>
<svg style="left:1254.3px;top:246px" width="13" height="9" viewBox="0 0 13 9"><path fill="none" stroke="#5f5f5f" stroke-width="1.8" stroke-linecap="round" d="M2.2 2.3l4.4 4.4 4.4-4.4"/></svg>
<div class="abs" style="left:995px;top:271px;width:282px;height:1px;background:#f2f2f2"></div>
<div class="t" style="left:1006px;top:288px;font-size:16.5px;letter-spacing:1.07px;color:#212121">Data Account</div>
<div class="t" style="left:1119px;top:290px;font-size:13px;letter-spacing:0.28px;color:#8a8a8a">Morgan Jones</div>
<svg style="left:1254.3px;top:294px" width="13" height="9" viewBox="0 0 13 9"><path fill="none" stroke="#5f5f5f" stroke-width="1.8" stroke-linecap="round" d="M2.2 2.3l4.4 4.4 4.4-4.4"/></svg>
<div class="abs" style="left:995px;top:319px;width:282px;height:1px;background:#f2f2f2"></div>
<div class="t" style="left:1006px;top:336px;font-size:16.5px;letter-spacing:1.0px;color:#212121">Configure</div>
<div class="t" style="left:1119px;top:338px;font-size:13px;letter-spacing:0.31px;color:#8a8a8a">- Morgan Jones</div>
<svg style="left:1254.3px;top:342px" width="13" height="9" viewBox="0 0 13 9"><path fill="none" stroke="#5f5f5f" stroke-width="1.8" stroke-linecap="round" d="M2.2 2.3l4.4 4.4 4.4-4.4"/></svg>
<div class="abs" style="left:995px;top:367px;width:282px;height:1px;background:#f2f2f2"></div>
<div class="t" style="left:1006px;top:384px;font-size:16.5px;letter-spacing:0.62px;color:#212121">Date Range</div>
<div class="t" style="left:1119px;top:386px;font-size:13px;letter-spacing:0.04px;color:#8a8a8a">Last 7 days</div>
<svg style="left:1254.3px;top:390px" width="13" height="9" viewBox="0 0 13 9"><path fill="none" stroke="#5f5f5f" stroke-width="1.8" stroke-linecap="round" d="M2.2 2.3l4.4 4.4 4.4-4.4"/></svg>
<div class="abs" style="left:995px;top:415px;width:282px;height:1px;background:#f2f2f2"></div>
<div class="t" style="left:1006px;top:432px;font-size:16.5px;letter-spacing:0.24px;color:#212121">Fields</div>
<div class="t" style="left:1119px;top:434px;font-size:13px;letter-spacing:0.49px;color:#8a8a8a">Account name</div>
<svg style="left:1254.3px;top:438px" width="13" height="9" viewBox="0 0 13 9"><path fill="none" stroke="#5f5f5f" stroke-width="1.8" stroke-linecap="round" d="M2.2 2.3l4.4 4.4 4.4-4.4"/></svg>
<div class="abs" style="left:995px;top:463px;width:282px;height:1px;background:#f2f2f2"></div>
<div class="t" style="left:1006px;top:480px;font-size:16.5px;letter-spacing:0.14px;color:#212121">Filter</div>
<div class="t" style="left:1119px;top:482px;font-size:13px;letter-spacing:0.08px;color:#8a8a8a">No filter</div>
<svg style="left:1254.3px;top:486px" width="13" height="9" viewBox="0 0 13 9"><path fill="none" stroke="#5f5f5f" stroke-width="1.8" stroke-linecap="round" d="M2.2 2.3l4.4 4.4 4.4-4.4"/></svg>
<div class="abs" style="left:995px;top:529px;width:281px;height:470px;background:#fff;border-radius:4px;box-shadow:0 0 1px 0.3px rgba(0,0,0,.25)"></div>
<div class="t" style="left:1007px;top:553px;font-size:16.5px;letter-spacing:1px;color:#212121">Options</div>
<svg style="left:1253.6px;top:553.5px" width="13" height="9" viewBox="0 0 13 9"><path fill="none" stroke="#5f5f5f" stroke-width="1.8" stroke-linecap="round" d="M2.2 6.9l4.4-4.4 4.4 4.4"/></svg>
<div class="abs" style="left:1019px;top:775px;width:233px;height:57px;background:#e0e0e0"></div>
<div class="abs" style="left:1019px;top:830px;width:233px;height:2px;background:#2f7bf5"></div>
<div class="t" style="left:1035px;top:779.5px;font-size:12px;letter-spacing:0.6px;color:#4a8af4">Limit</div>
<div class="t" style="left:1035px;top:804px;font-size:16px;letter-spacing:0.55px;color:#333">1000000</div>
<svg style="left:1226px;top:802px" width="10" height="5" viewBox="0 0 10 5"><path fill="#4a8af4" d="M0 0h10L5 5z"/></svg>
<div class="abs" style="left:1019px;top:500px;width:233px;height:275px;background:#fff;box-shadow:0 2px 12px rgba(0,0,0,.3)"></div>
<div class="t" style="left:1035px;top:503px;font-size:15px;letter-spacing:0.45px;color:#4a4a4a">100</div>
<div class="t" style="left:1035px;top:551px;font-size:15px;letter-spacing:0.45px;color:#4a4a4a">500</div>
<div class="t" style="left:1035px;top:599px;font-size:15px;letter-spacing:0.45px;color:#4a4a4a">1000</div>
<div class="t" style="left:1035px;top:647px;font-size:15px;letter-spacing:0.45px;color:#4a4a4a">10000</div>
<div class="t" style="left:1035px;top:695px;font-size:15px;letter-spacing:0.45px;color:#4a4a4a">100000</div>
<div class="abs" style="left:1018px;top:727px;width:217px;height:45px;background:#f5f5f5"></div>
<div class="t" style="left:1035px;top:743px;font-size:15px;letter-spacing:0.55px;color:#4a8af4">1000000</div>
<svg style="left:1200px;top:744px" width="20" height="14" viewBox="0 0 20 14"><path fill="none" stroke="#3b82f6" stroke-width="2.1" d="M2 6.5l4.8 5L17.9 1.8"/></svg>
<div class="abs" style="left:1235px;top:500px;width:17px;height:275px;background:#f1f1f1"></div>
<div class="abs" style="left:1237px;top:620px;width:13px;height:134px;background:#c1c1c1"></div>
<svg style="left:1240px;top:507px" width="8" height="5" viewBox="0 0 10 5"><path fill="#505050" d="M0 5h10L5 0z"/></svg>
<svg style="left:1240px;top:763px" width="8" height="5" viewBox="0 0 10 5"><path fill="#505050" d="M0 0h10L5 5z"/></svg>
<div class="abs" style="left:1015px;top:724px;width:223px;height:51px;border:3px solid #ff0000"></div>
<svg style="left:1148px;top:734px" width="30" height="34" viewBox="0 0 30 34">
<path d="M10.5 8.5Q10.5 7.3 12 7.3Q13.5 7.3 13.5 8.5V12.5H15.5L16.5 13.5H18.5L19.5 14.5H20.5L22.5 16.5V22.5L21.5 23.5L20.5 26.5V28.5H11.5V26.5L10.5 25.5L6.5 18.5V16.5H8.5L10.5 18.5z" fill="#fff" stroke="#000" stroke-width="1.1" stroke-linejoin="miter"/>
<path d="M10.5 18V20.8M13.5 12.5V16.8M16.5 13.5V16.8M19.5 14.5V17.8" stroke="#000" stroke-width="1.1"/>
</svg>
<div class="abs" style="left:1030px;top:873px;width:18px;height:18px;border-radius:2px;background:#ff9800"></div>
<svg style="left:1030px;top:873px" width="18" height="18" viewBox="0 0 18 18"><path fill="none" stroke="#000" stroke-width="1.9" d="M3.1 9.9L6.6 13.1 15.1 4.7"/></svg>
<div class="abs" style="left:1030px;top:918px;width:18px;height:18px;border-radius:2px;background:#ff9800"></div>
<svg style="left:1030px;top:918px" width="18" height="18" viewBox="0 0 18 18"><path fill="none" stroke="#000" stroke-width="1.9" d="M3.1 9.9L6.6 13.1 15.1 4.7"/></svg>
<div class="abs" style="left:1030px;top:963px;width:18px;height:18px;border-radius:2px;border:2px solid #666"></div>
<svg style="left:1229px;top:871px" width="14" height="14" viewBox="0 0 14 14"><circle cx="7" cy="7" r="7" fill="#777"/><path fill="none" stroke="#fff" stroke-width="1.6" d="M4.8 5.2a2.2 2.1 0 1 1 3.2 1.9c-.6.4-1 .8-1 1.7"/><rect x="6.2" y="9.9" width="1.6" height="1.7" fill="#fff"/></svg>
<svg style="left:1229px;top:961px" width="14" height="14" viewBox="0 0 14 14"><circle cx="7" cy="7" r="7" fill="#777"/><path fill="none" stroke="#fff" stroke-width="1.6" d="M4.8 5.2a2.2 2.1 0 1 1 3.2 1.9c-.6.4-1 .8-1 1.7"/><rect x="6.2" y="9.9" width="1.6" height="1.7" fill="#fff"/></svg>
<div class="t" style="left:1063px;top:861.3px;font-size:16.5px;letter-spacing:0.74px;color:#212121">Show report</div>
<div class="t" style="left:1063px;top:886.3px;font-size:16.5px;letter-spacing:1.08px;color:#212121">header</div>
<div class="t" style="left:1063px;top:919.3px;font-size:16.5px;letter-spacing:0.83px;color:#212121">Show column headers</div>
<div class="t" style="left:1063px;top:951.3px;font-size:16.5px;letter-spacing:0.67px;color:#212121">Show all time</div>
<div class="t" style="left:1063px;top:976.3px;font-size:16.5px;letter-spacing:0.6px;color:#212121">values</div>
</body></html>
